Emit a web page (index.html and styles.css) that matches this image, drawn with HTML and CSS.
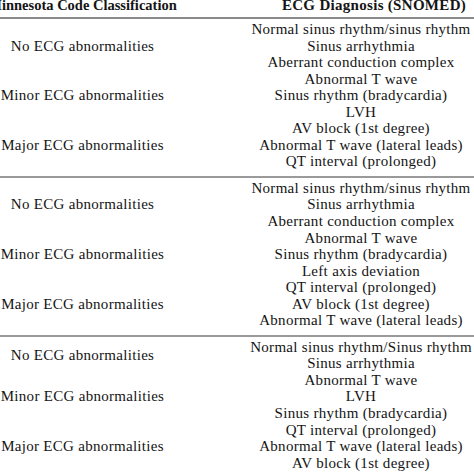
FILE: index.html
```html
<!DOCTYPE html>
<html lang="en">
<head>
<meta charset="utf-8">
<title>ECG classification table</title>
<link rel="stylesheet" href="styles.css">
</head>
<body>
<div class="table">
  <div class="head">
    <div class="hcell left">Minnesota Code Classification</div>
    <div class="hcell right">ECG Diagnosis (SNOMED)</div>
  </div>

  <div class="section first">
    <div class="group">
      <div class="label">No ECG abnormalities</div>
      <div class="items">
        <div>Normal sinus rhythm/sinus rhythm</div>
        <div>Sinus arrhythmia</div>
        <div>Aberrant conduction complex</div>
      </div>
    </div>
    <div class="group">
      <div class="label">Minor ECG abnormalities</div>
      <div class="items">
        <div>Abnormal T wave</div>
        <div>Sinus rhythm (bradycardia)</div>
        <div>LVH</div>
      </div>
    </div>
    <div class="group">
      <div class="label">Major ECG abnormalities</div>
      <div class="items">
        <div>AV block (1st degree)</div>
        <div>Abnormal T wave (lateral leads)</div>
        <div>QT interval (prolonged)</div>
      </div>
    </div>
  </div>

  <div class="section">
    <div class="group">
      <div class="label">No ECG abnormalities</div>
      <div class="items">
        <div>Normal sinus rhythm/sinus rhythm</div>
        <div>Sinus arrhythmia</div>
        <div>Aberrant conduction complex</div>
      </div>
    </div>
    <div class="group">
      <div class="label">Minor ECG abnormalities</div>
      <div class="items">
        <div>Abnormal T wave</div>
        <div>Sinus rhythm (bradycardia)</div>
        <div>Left axis deviation</div>
      </div>
    </div>
    <div class="group">
      <div class="label">Major ECG abnormalities</div>
      <div class="items">
        <div>QT interval (prolonged)</div>
        <div>AV block (1st degree)</div>
        <div>Abnormal T wave (lateral leads)</div>
      </div>
    </div>
  </div>

  <div class="section">
    <div class="group">
      <div class="label">No ECG abnormalities</div>
      <div class="items">
        <div>Normal sinus rhythm/Sinus rhythm</div>
        <div>Sinus arrhythmia</div>
      </div>
    </div>
    <div class="group">
      <div class="label">Minor ECG abnormalities</div>
      <div class="items">
        <div>Abnormal T wave</div>
        <div>LVH</div>
        <div>Sinus rhythm (bradycardia)</div>
      </div>
    </div>
    <div class="group">
      <div class="label">Major ECG abnormalities</div>
      <div class="items">
        <div>QT interval (prolonged)</div>
        <div>Abnormal T wave (lateral leads)</div>
        <div>AV block (1st degree)</div>
      </div>
    </div>
  </div>
</div>
</body>
</html>
```

FILE: styles.css
```css
html, body {
  margin: 0;
  padding: 0;
  background: #ffffff;
  overflow: hidden;
}

body {
  width: 474px;
  height: 474px;
  font-family: "Liberation Serif", "Times New Roman", serif;
  font-size: 15px;
  letter-spacing: 0.3px;
  color: #141414;
}

.table {
  width: 474px;
}

.head {
  display: grid;
  grid-template-columns: 165px 83px 226px;
  height: 17px;
  line-height: 11px;
  font-weight: bold;
  border-bottom: 2px solid #8a8a8a;
}

.hcell {
  display: flex;
  justify-content: center;
  white-space: nowrap;
}

.hcell.left {
  grid-column: 1;
  font-size: 14.5px;
  letter-spacing: 0;
}

.hcell.right {
  grid-column: 3;
  padding-left: 26px;
}

.section {
  padding: 2px 0 6px;
  border-top: 2px solid #9a9a9a;
  line-height: 16.55px;
}

.section.first {
  border-top: none;
}

.group {
  display: grid;
  grid-template-columns: 165px 83px 226px;
}

.label {
  grid-column: 1;
  display: flex;
  align-items: center;
  justify-content: center;
  white-space: nowrap;
}

.items {
  grid-column: 3;
  display: flex;
  flex-direction: column;
  align-items: center;
  white-space: nowrap;
}
```
